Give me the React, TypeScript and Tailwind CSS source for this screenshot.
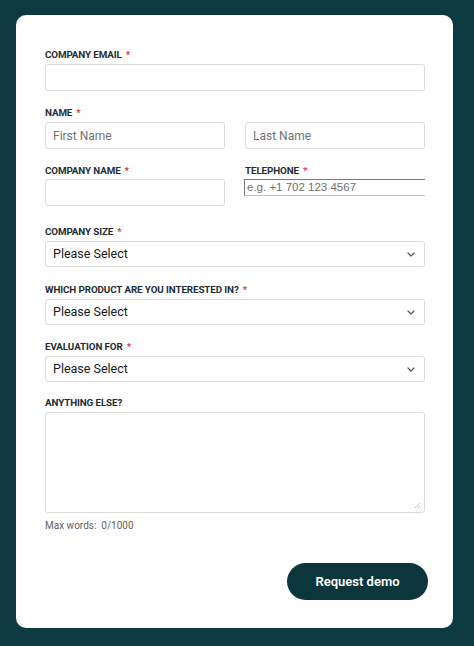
import React from "react";

const Label = ({ text, req = true, className = "" }: { text: string; req?: boolean; className?: string }) => (
  <div className={"h-[12px] text-[9.8px] leading-[12px] font-bold uppercase tracking-[-0.1px] text-[#1d2d33] " + className}>
    {text}
    {req && <span className="ml-[4px] text-[#d6333a]">*</span>}
  </div>
);

const Chevron = () => (
  <svg width="8" height="5" viewBox="0 0 8 5" className="text-[#555]">
    <path d="M1 1 L4 4 L7 1" fill="none" stroke="currentColor" strokeWidth="1.2" strokeLinecap="round" strokeLinejoin="round" />
  </svg>
);

const Select = () => (
  <div className="mt-[3px] h-[26px] w-full rounded-[3px] border border-[#dcdcdc] bg-white flex items-center justify-between pl-[7px] pr-[9px]">
    <span className="text-[12.5px] font-normal text-[#15191b]">Please Select</span>
    <Chevron />
  </div>
);

const Input = ({ placeholder = "" }: { placeholder?: string }) => (
  <div className="mt-[3px] h-[27px] w-full rounded-[3px] border border-[#dcdcdc] bg-white flex items-center pl-[7px]">
    <span className="text-[12px] text-[#6e7275]">{placeholder}</span>
  </div>
);

export default function App() {
  return (
    <div className="w-[474px] h-[646px] bg-[#0d3a40] pt-[15px] pl-[16px]" style={{ fontFamily: "Roboto, 'Liberation Sans', sans-serif" }}>
      <div className="w-[437px] h-[613px] bg-white rounded-[10px] pl-[29px] pr-[28px] pt-[34px] flex flex-col">
        <Label text="Company Email" />
        <Input />

        <div className="mt-[16px] flex gap-[20px]">
          <div className="w-[180px]">
            <Label text="Name" />
            <Input placeholder="First Name" />
          </div>
          <div className="w-[180px]">
            <Label text="" req={false} />
            <Input placeholder="Last Name" />
          </div>
        </div>

        <div className="mt-[16px] flex gap-[19px]">
          <div className="w-[180px]">
            <Label text="Company Name" />
            <div className="mt-[2px] h-[27px] w-full rounded-[3px] border border-[#dcdcdc] bg-white" />
          </div>
          <div className="w-[181px]">
            <Label text="Telephone" className="pl-[1px]" />
            <div className="mt-[2px] w-[181px] overflow-hidden">
              <div
                className="h-[17px] w-[200px] border border-t-[#7b7b7b] border-l-[#7b7b7b] border-b-[#c4c4c4] border-r-[#c4c4c4] bg-white flex items-center pl-[2px]"
                style={{ fontFamily: "'Liberation Sans', Arial, sans-serif" }}
              >
                <span className="text-[11.5px] text-[#707070]">e.g. +1 702 123 4567</span>
              </div>
            </div>
          </div>
        </div>

        <Label text="Company Size" className="mt-[20px]" />
        <Select />

        <Label text="Which product are you interested in?" className="mt-[17px]" />
        <Select />

        <Label text="Evaluation For" className="mt-[16px]" />
        <Select />

        <Label text="Anything Else?" req={false} className="mt-[15px]" />
        <div className="mt-[3px] h-[101px] w-full rounded-[3px] border border-[#dcdcdc] bg-white relative">
          <svg width="7" height="7" viewBox="0 0 7 7" className="absolute right-[3px] bottom-[3px]">
            <path d="M6 1 L1 6 M6 4 L4 6" stroke="#b0b0b0" strokeWidth="0.8" />
          </svg>
        </div>
        <div className="mt-[6px] text-[10px] leading-[14px] text-[#5f6366]">Max words:&nbsp; 0/1000</div>

        <div className="mt-[30px] flex justify-end">
          <div className="mr-[-3px] w-[141px] h-[37px] rounded-full bg-[#0d363c] flex items-center justify-center text-white text-[13px] font-semibold">
            Request demo
          </div>
        </div>
      </div>
    </div>
  );
}
